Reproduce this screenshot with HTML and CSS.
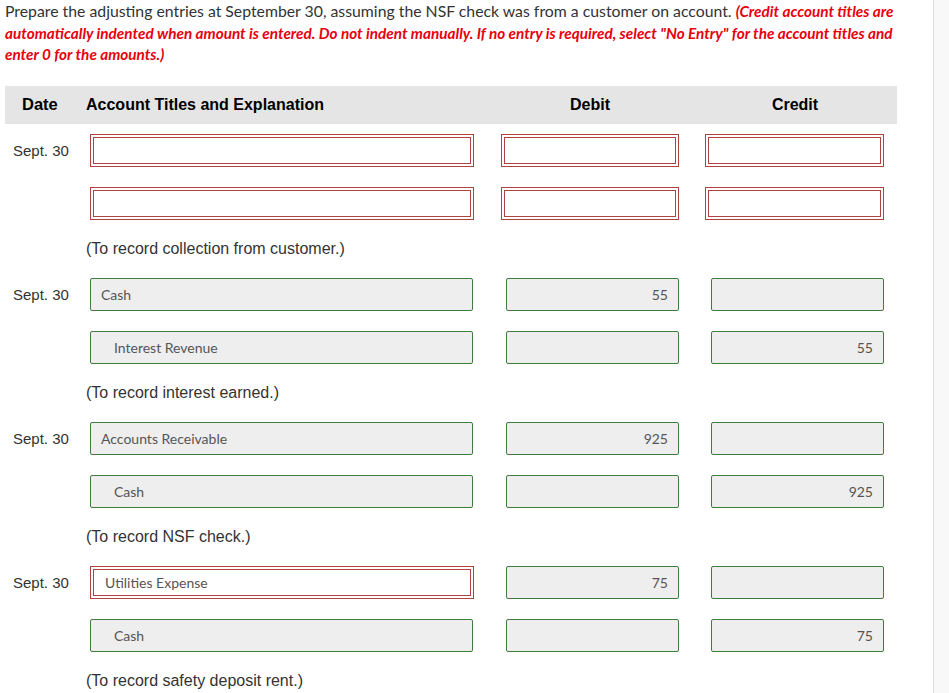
FILE: index.html
```html
<!DOCTYPE html>
<html lang="en">
<head>
    <meta charset="UTF-8">
    <meta name="viewport" content="width=device-width, initial-scale=1.0">
    <title>Adjusting Entries</title>
    <link rel="stylesheet" href="styles.css">
</head>
<body>
    <div class="page">
        <p class="prompt">
            Prepare the adjusting entries at September 30, assuming the NSF check was from a customer on account.
            <em>(Credit account titles are automatically indented when amount is entered. Do not indent manually. If no entry is required, select "No Entry" for the account titles and enter 0 for the amounts.)</em>
        </p>

        <div class="journal">
            <div class="head">
                <div class="h-date">Date</div>
                <div class="h-title">Account Titles and Explanation</div>
                <div class="h-amt">Debit</div>
                <div class="h-amt">Credit</div>
            </div>

            <!-- entry 1 -->
            <div class="entry">
                <div class="line">
                    <div class="date">Sept. 30</div>
                    <div class="cell"><div class="box title err"></div></div>
                    <div class="cell"><div class="box debit err"></div></div>
                    <div class="cell"><div class="box credit err"></div></div>
                </div>
                <div class="line">
                    <div class="date"></div>
                    <div class="cell"><div class="box title err"></div></div>
                    <div class="cell"><div class="box debit err"></div></div>
                    <div class="cell"><div class="box credit err"></div></div>
                </div>
                <div class="note">(To record collection from customer.)</div>
            </div>

            <!-- entry 2 -->
            <div class="entry">
                <div class="line">
                    <div class="date">Sept. 30</div>
                    <div class="cell"><div class="box title ok">Cash</div></div>
                    <div class="cell"><div class="box debit ok">55</div></div>
                    <div class="cell"><div class="box credit ok"></div></div>
                </div>
                <div class="line">
                    <div class="date"></div>
                    <div class="cell"><div class="box title ok indent">Interest Revenue</div></div>
                    <div class="cell"><div class="box debit ok"></div></div>
                    <div class="cell"><div class="box credit ok">55</div></div>
                </div>
                <div class="note">(To record interest earned.)</div>
            </div>

            <!-- entry 3 -->
            <div class="entry">
                <div class="line">
                    <div class="date">Sept. 30</div>
                    <div class="cell"><div class="box title ok">Accounts Receivable</div></div>
                    <div class="cell"><div class="box debit ok">925</div></div>
                    <div class="cell"><div class="box credit ok"></div></div>
                </div>
                <div class="line">
                    <div class="date"></div>
                    <div class="cell"><div class="box title ok indent">Cash</div></div>
                    <div class="cell"><div class="box debit ok"></div></div>
                    <div class="cell"><div class="box credit ok">925</div></div>
                </div>
                <div class="note">(To record NSF check.)</div>
            </div>

            <!-- entry 4 -->
            <div class="entry">
                <div class="line">
                    <div class="date">Sept. 30</div>
                    <div class="cell"><div class="box title err">Utilities Expense</div></div>
                    <div class="cell"><div class="box debit ok">75</div></div>
                    <div class="cell"><div class="box credit ok"></div></div>
                </div>
                <div class="line">
                    <div class="date"></div>
                    <div class="cell"><div class="box title ok indent">Cash</div></div>
                    <div class="cell"><div class="box debit ok"></div></div>
                    <div class="cell"><div class="box credit ok">75</div></div>
                </div>
                <div class="note">(To record safety deposit rent.)</div>
            </div>
        </div>
    </div>
    <div class="scrollbar"></div>
</body>
</html>
```

FILE: styles.css
```css
html,
body {
    margin: 0;
    padding: 0;
    height: 100%;
    overflow: hidden;
}

body {
    display: flex;
    background-color: #fff;
    font-family: Lato, "Open Sans", sans-serif;
    color: #333;
}

.page {
    width: 928px;
    padding-left: 5px;
    flex: none;
}

.scrollbar {
    flex: 1;
    border-left: 1px solid #dcdcdc;
    background-color: #f8f8f8;
}

.prompt {
    width: 902px;
    margin: 0 0 21px;
    font-size: 15.8px;
    line-height: 21.5px;
    color: #333;
}

.prompt em {
    color: #e8000d;
    font-weight: bold;
    font-size: 15.3px;
    line-height: 16px;
}

.journal {
    width: 892px;
}

.head,
.line {
    display: grid;
    grid-template-columns: 80px 402px 206px 204px;
}

.head {
    height: 38px;
    align-items: center;
    background-color: #e5e5e5;
    font-family: "Liberation Sans", Arial, sans-serif;
    font-weight: bold;
    font-size: 16px;
    color: #000;
    margin-bottom: 10px;
}

.h-date {
    padding-left: 17px;
    font-size: 16.5px;
}

.h-title {
    padding-left: 1px;
}

.h-amt {
    text-align: center;
}

.line {
    height: 33px;
    margin-bottom: 20px;
}

.line + .line {
    margin-bottom: 0;
}

.date {
    padding-left: 8px;
    display: flex;
    align-items: center;
    font-family: "Liberation Sans", Arial, sans-serif;
    font-size: 15px;
    color: #333;
}

.cell {
    display: flex;
}

.box {
    box-sizing: border-box;
    height: 33px;
    display: flex;
    align-items: center;
    font-size: 14px;
    color: #555;
}

.title {
    margin-left: 5px;
    width: 384px;
    padding-left: 10px;
}

.title.indent {
    padding-left: 23px;
}

.debit,
.credit {
    justify-content: flex-end;
    padding-right: 10px;
}

.debit {
    margin-left: 14px;
    width: 178px;
}

.credit {
    margin-left: 12px;
    width: 179px;
}

.err {
    border: 1px solid #b0433f;
    box-shadow: inset 0 0 0 2px #fff, inset 0 0 0 3px #b0433f;
    background-color: #fff;
    padding-left: 14px;
}

.ok {
    border: 1px solid #3f7d3f;
    border-radius: 2px;
    background-color: #eee;
}

.title.ok {
    width: 383px;
}

.debit.ok {
    margin-left: 19px;
    width: 173px;
}

.credit.ok {
    margin-left: 18px;
    width: 173px;
}

.note {
    height: 58px;
    display: flex;
    align-items: center;
    padding-left: 81px;
    font-family: "Liberation Sans", Arial, sans-serif;
    font-size: 16px;
    color: #333;
}
```
